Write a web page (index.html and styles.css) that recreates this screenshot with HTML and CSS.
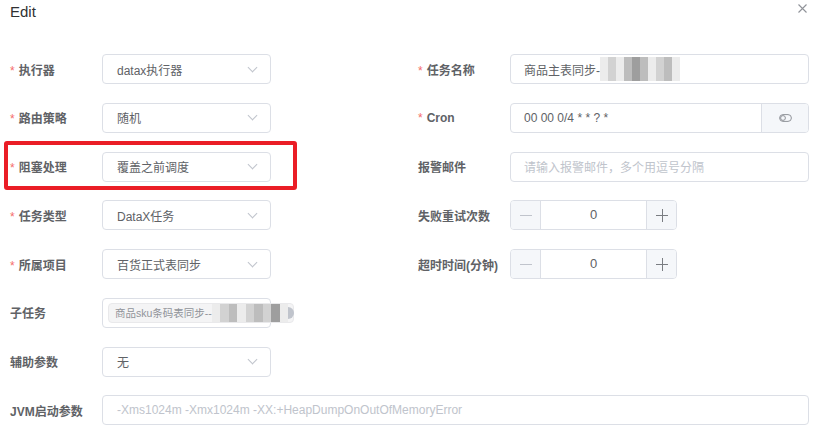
FILE: index.html
```html
<!DOCTYPE html>
<html lang="zh">
<head>
<meta charset="utf-8">
<title>Edit</title>
<link rel="stylesheet" href="styles.css">
</head>
<body>
<div class="dialog">
  <div class="header">
    <span class="title">Edit</span>
    <span class="close">
      <svg width="9" height="9" viewBox="0 0 9 9"><path d="M0.5 0.5L8.5 8.5M8.5 0.5L0.5 8.5" stroke="#909399" stroke-width="1.1" fill="none"/></svg>
    </span>
  </div>
  <div class="form">
    <div class="item">
      <label class="label req">执行器</label>
      <div class="select"><span class="val">datax执行器</span><span class="arrow"></span></div>
    </div>
    <div class="item">
      <label class="label req">任务名称</label>
      <div class="input wide right"><span class="val">商品主表同步-</span><span class="mosaic m1"><i class="t a"></i><i class="t b"></i><i class="t a"></i><i class="t c"></i><i class="t d"></i><i class="t c"></i><i class="t a"></i><i class="t b"></i><i class="t c"></i><i class="t a"></i></span></div>
    </div>

    <div class="item">
      <label class="label req">路由策略</label>
      <div class="select"><span class="val">随机</span><span class="arrow"></span></div>
    </div>
    <div class="item">
      <label class="label req">Cron</label>
      <div class="input wide right group">
        <span class="val grow">00 00 0/4 * * ? *</span>
        <span class="append">
          <svg width="13" height="8" viewBox="0 0 13 8"><rect x="0.6" y="0.6" width="11.8" height="6.8" rx="3.4" fill="none" stroke="#909399" stroke-width="1"/><circle cx="4" cy="4" r="2.4" fill="none" stroke="#909399" stroke-width="1"/></svg>
        </span>
      </div>
    </div>

    <div class="item">
      <label class="label req">阻塞处理</label>
      <div class="select"><span class="val">覆盖之前调度</span><span class="arrow"></span></div>
    </div>
    <div class="item">
      <label class="label">报警邮件</label>
      <div class="input wide right"><span class="ph">请输入报警邮件，多个用逗号分隔</span></div>
    </div>

    <div class="item">
      <label class="label req">任务类型</label>
      <div class="select disabled"><span class="val">DataX任务</span><span class="arrow"></span></div>
    </div>
    <div class="item">
      <label class="label">失败重试次数</label>
      <div class="number"><span class="btn minus"><i class="h"></i></span><span class="num">0</span><span class="btn plus"><i class="h"></i><i class="v"></i></span></div>
    </div>

    <div class="item">
      <label class="label req">所属项目</label>
      <div class="select"><span class="val">百货正式表同步</span><span class="arrow"></span></div>
    </div>
    <div class="item">
      <label class="label">超时时间(分钟)</label>
      <div class="number"><span class="btn minus"><i class="h"></i></span><span class="num">0</span><span class="btn plus"><i class="h"></i><i class="v"></i></span></div>
    </div>

    <div class="item">
      <label class="label">子任务</label>
      <div class="select tags">
        <span class="tag"><span class="tagtext">商品sku条码表同步--</span><span class="mosaic m2"><i class="t a"></i><i class="t b"></i><i class="t c"></i><i class="t a"></i><i class="t b"></i><i class="t c"></i><i class="t b"></i><i class="t d"></i><i class="t a"></i></span><span class="tagclose"></span></span>
      </div>
    </div>
    <div class="item empty"></div>

    <div class="item">
      <label class="label">辅助参数</label>
      <div class="select"><span class="val">无</span><span class="arrow"></span></div>
    </div>
    <div class="item empty"></div>

    <div class="item full">
      <label class="label">JVM启动参数</label>
      <div class="input grow"><span class="ph">-Xms1024m -Xmx1024m -XX:+HeapDumpOnOutOfMemoryError</span></div>
    </div>
  </div>
  <div class="highlight"></div>
</div>
</body>
</html>
```

FILE: styles.css
```css
* { box-sizing: border-box; }
html, body { margin: 0; padding: 0; background: #fff; }
body {
  font-family: "Liberation Sans", "Noto Sans CJK SC", sans-serif;
  color: #606266;
  width: 816px;
  height: 429px;
  overflow: hidden;
}
.dialog { position: relative; width: 816px; height: 429px; }
.header {
  display: flex;
  justify-content: space-between;
  align-items: flex-start;
  height: 24px;
  padding: 0 9px 0 10px;
}
.title { font-size: 15px; line-height: 24px; color: #303133; }
.close { display: flex; margin-top: 4px; }
.form {
  margin-top: 30px;
  padding-left: 10px;
  display: grid;
  grid-template-columns: 408px 391px;
  grid-auto-rows: 30px;
  row-gap: 18.75px;
}
.item { display: flex; align-items: center; }
.item.full { grid-column: 1 / 3; }
.label {
  width: 92px;
  flex: none;
  font-size: 12px;
  font-weight: 700;
  color: #606266;
  white-space: nowrap;
}
.label.req::before { content: "*"; color: #f56c6c; margin-right: 4px; font-weight: 400; }
.select, .input {
  height: 30px;
  border: 1px solid #dcdfe6;
  border-radius: 4px;
  display: flex;
  align-items: center;
  padding: 0 0 0 14px;
  font-size: 12px;
  background: #fff;
}
.input.right { padding-left: 13px; }
.select { width: 169px; position: relative; }
.select .val { flex: 1; white-space: nowrap; }
.arrow {
  width: 7px; height: 7px;
  border-right: 1px solid #c0c4cc;
  border-bottom: 1px solid #c0c4cc;
  transform: rotate(45deg);
  margin: -4px 14px 0 0;
}
.input.wide { width: 299px; }
.input.grow { flex: 1; }
.input .val { white-space: nowrap; color: #606266; }
.val.grow { flex: 1; }
.ph { color: #c0c4cc; white-space: nowrap; }
.group { padding-right: 0; overflow: hidden; }
.append {
  width: 47px; height: 100%;
  background: #f5f7fa;
  border-left: 1px solid #dcdfe6;
  display: flex; align-items: center; justify-content: center;
}
.mosaic { display: inline-flex; }
.mosaic .t { display: block; width: 8px; }
.m1 { height: 24px; align-items: stretch; }
.m1 .t { height: 24px; }
.t.a { background: #ececec; }
.t.b { background: #d2d2d2; }
.t.c { background: #bdbdbd; }
.t.d { background: #9e9e9e; }
.m2 { height: 18px; }
.m2 .t { height: 18px; width: 8.5px; }
.number {
  width: 167px; height: 30px;
  border: 1px solid #dcdfe6;
  border-radius: 4px;
  display: flex;
  overflow: hidden;
}
.btn {
  width: 30px; flex: none;
  background: #f5f7fa;
  position: relative;
}
.minus { border-right: 1px solid #dcdfe6; }
.plus { border-left: 1px solid #dcdfe6; }
.btn .h, .btn .v { position: absolute; display: block; background: #7a7d82; }
.btn .h { left: 9px; top: 14px; width: 12px; height: 1px; }
.btn .v { left: 14.5px; top: 8px; width: 1px; height: 13px; }
.minus .h { background: #c0c4cc; }
.num { flex: 1; text-align: center; font-size: 13px; line-height: 28px; color: #606266; }
.tags { padding-left: 5px; overflow: visible; }
.tag {
  display: inline-flex;
  align-items: center;
  height: 20px;
  padding: 0 0 0 6px;
  background: #f4f4f5;
  border: 1px solid #e9e9eb;
  border-radius: 4px;
  font-size: 10.5px;
  color: #909399;
  white-space: nowrap;
  position: relative;
  z-index: 1;
}
.tagclose {
  width: 6px; height: 12px;
  border-radius: 0 6px 6px 0;
  background: #c0c4cc;
  margin-right: -1px;
}
.highlight {
  position: absolute;
  left: 4px; top: 141px;
  width: 293px; height: 49px;
  border: 4px solid #ea1d26;
  border-radius: 3px;
  pointer-events: none;
}
```
